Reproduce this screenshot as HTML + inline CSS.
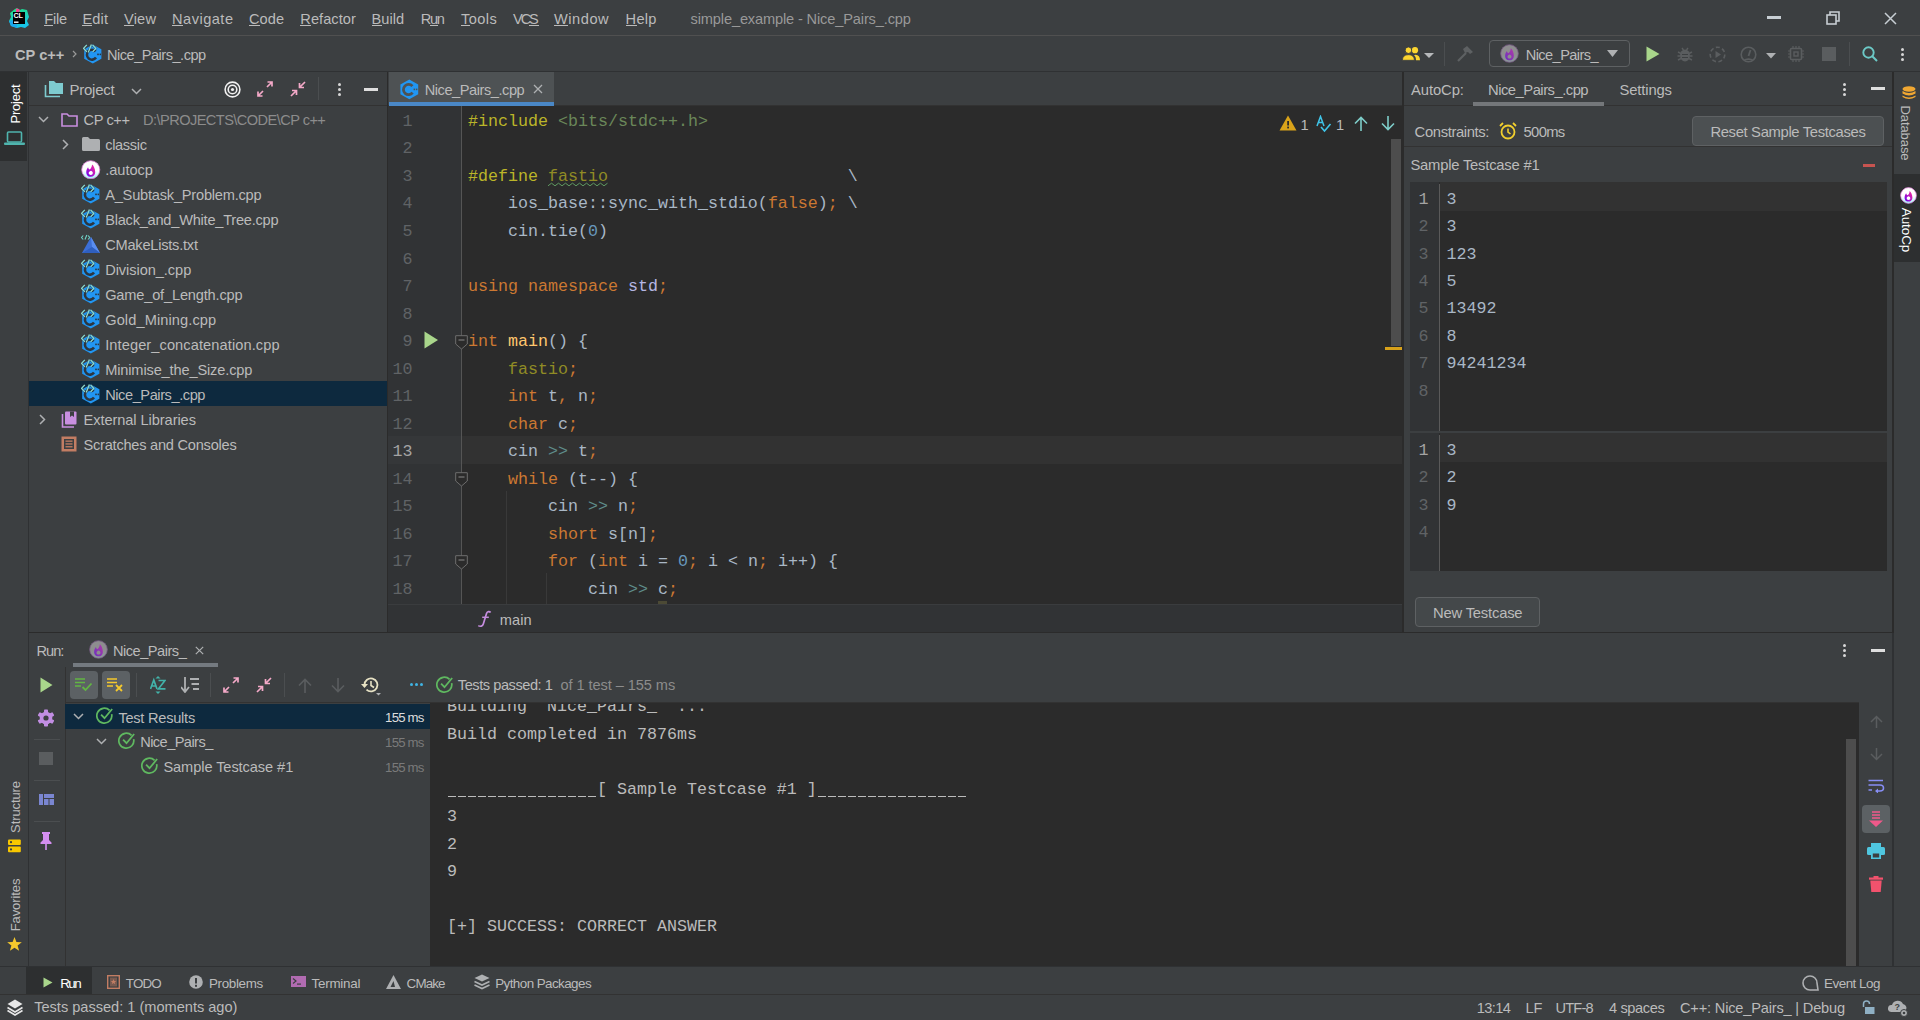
<!DOCTYPE html>
<html><head><meta charset="utf-8"><style>
html,body{margin:0;padding:0;}
body{width:1920px;height:1020px;position:relative;overflow:hidden;background:#3c3f41;font-family:"Liberation Sans",sans-serif;}
body div, body svg{position:absolute;}
body div div{position:absolute;}
</style></head><body>
<div style="left:0px;top:0px;width:1920px;height:35px;background:#3c3f41;"></div>
<div style="left:0px;top:35px;width:1920px;height:1px;background:#505050;"></div>
<svg style="left:9px;top:8px;" width="21" height="21" viewBox="0 0 21 21">
<defs><linearGradient id="lg1" x1="0" y1="0" x2="0.3" y2="1"><stop offset="0" stop-color="#21e37a"/><stop offset="1" stop-color="#18c4e8"/></linearGradient></defs>
<polygon points="1,5 6,1 8,0 11,2 13,1 18,2 20,9 18,13 20,17 16,20 12,19 8,20 2,18 0,13 2,9" fill="url(#lg1)"/>
<polygon points="7,0.5 10,1 11,3 9,4.5 7,4" fill="#f3438f"/>
<polygon points="0,13 4,12 8,17 8,20 2,18" fill="#1ba8ee"/>
<rect x="4" y="4" width="12" height="12" fill="#000"/>
<text x="4.6" y="10.4" font-family="Liberation Sans" font-weight="700" font-size="7.2" fill="#fff" letter-spacing="-0.3">CL</text>
<rect x="5" y="13.5" width="4.5" height="1.4" fill="#fff"/>
</svg>
<div style="left:44.30px;top:8.94px;font-size:14.6px;line-height:20px;color:#bbbbbb;font-family:'Liberation Sans', sans-serif;white-space:pre;letter-spacing:-0.269px;">File</div>
<div style="left:82.50px;top:8.94px;font-size:14.6px;line-height:20px;color:#bbbbbb;font-family:'Liberation Sans', sans-serif;white-space:pre;letter-spacing:0.105px;">Edit</div>
<div style="left:124.00px;top:8.94px;font-size:14.6px;line-height:20px;color:#bbbbbb;font-family:'Liberation Sans', sans-serif;white-space:pre;letter-spacing:0.203px;">View</div>
<div style="left:172.00px;top:8.94px;font-size:14.6px;line-height:20px;color:#bbbbbb;font-family:'Liberation Sans', sans-serif;white-space:pre;letter-spacing:0.486px;">Navigate</div>
<div style="left:249.00px;top:8.94px;font-size:14.6px;line-height:20px;color:#bbbbbb;font-family:'Liberation Sans', sans-serif;white-space:pre;letter-spacing:0.035px;">Code</div>
<div style="left:300.30px;top:8.94px;font-size:14.6px;line-height:20px;color:#bbbbbb;font-family:'Liberation Sans', sans-serif;white-space:pre;letter-spacing:0.059px;">Refactor</div>
<div style="left:371.50px;top:8.94px;font-size:14.6px;line-height:20px;color:#bbbbbb;font-family:'Liberation Sans', sans-serif;white-space:pre;letter-spacing:0.054px;">Build</div>
<div style="left:420.70px;top:8.94px;font-size:14.6px;line-height:20px;color:#bbbbbb;font-family:'Liberation Sans', sans-serif;white-space:pre;letter-spacing:-1.245px;">Run</div>
<div style="left:461.00px;top:8.94px;font-size:14.6px;line-height:20px;color:#bbbbbb;font-family:'Liberation Sans', sans-serif;white-space:pre;letter-spacing:0.427px;">Tools</div>
<div style="left:513.10px;top:8.94px;font-size:14.6px;line-height:20px;color:#bbbbbb;font-family:'Liberation Sans', sans-serif;white-space:pre;letter-spacing:-2.152px;">VCS</div>
<div style="left:554.00px;top:8.94px;font-size:14.6px;line-height:20px;color:#bbbbbb;font-family:'Liberation Sans', sans-serif;white-space:pre;letter-spacing:0.545px;">Window</div>
<div style="left:625.60px;top:8.94px;font-size:14.6px;line-height:20px;color:#bbbbbb;font-family:'Liberation Sans', sans-serif;white-space:pre;letter-spacing:0.266px;">Help</div>
<div style="left:44px;top:25px;width:9px;height:1px;background:#bbbbbb;"></div>
<div style="left:82px;top:25px;width:10px;height:1px;background:#bbbbbb;"></div>
<div style="left:124px;top:25px;width:10px;height:1px;background:#bbbbbb;"></div>
<div style="left:172px;top:25px;width:11px;height:1px;background:#bbbbbb;"></div>
<div style="left:249px;top:25px;width:11px;height:1px;background:#bbbbbb;"></div>
<div style="left:300px;top:25px;width:11px;height:1px;background:#bbbbbb;"></div>
<div style="left:372px;top:25px;width:10px;height:1px;background:#bbbbbb;"></div>
<div style="left:430px;top:25px;width:8px;height:1px;background:#bbbbbb;"></div>
<div style="left:461px;top:25px;width:9px;height:1px;background:#bbbbbb;"></div>
<div style="left:529px;top:25px;width:10px;height:1px;background:#bbbbbb;"></div>
<div style="left:554px;top:25px;width:14px;height:1px;background:#bbbbbb;"></div>
<div style="left:626px;top:25px;width:11px;height:1px;background:#bbbbbb;"></div>
<div style="left:690.60px;top:8.94px;font-size:14.6px;line-height:20px;color:#999999;font-family:'Liberation Sans', sans-serif;white-space:pre;letter-spacing:-0.141px;">simple_example - Nice_Pairs_.cpp</div>
<div style="left:1767px;top:16px;width:14px;height:3px;background:#c7ced3;"></div>
<svg style="left:1826px;top:11px;" width="14" height="14" viewBox="0 0 14 14">
<rect x="1" y="4" width="9" height="9" fill="none" stroke="#c7ced3" stroke-width="1.6"/>
<path d="M4 4 V1 H13 V10 H10" fill="none" stroke="#c7ced3" stroke-width="1.6"/>
</svg>
<svg style="left:1884px;top:12px;" width="13" height="13" viewBox="0 0 13 13"><path d="M1 1 L12 12 M12 1 L1 12" stroke="#c7ced3" stroke-width="1.5"/></svg>
<div style="left:0px;top:36px;width:1920px;height:35px;background:#3c3f41;"></div>
<div style="left:0px;top:71px;width:1920px;height:1px;background:#2f3133;"></div>
<div style="left:15.00px;top:44.54px;font-size:14.6px;line-height:20px;color:#bbbbbb;font-family:'Liberation Sans', sans-serif;white-space:pre;letter-spacing:0.025px;font-weight:700;">CP c++</div>
<svg style="left:72px;top:50px;" width="5" height="8" viewBox="0 0 5 8"><path d="M1 1 L4 4 L1 7" fill="none" stroke="#9a9a9a" stroke-width="1.2"/></svg>
<svg style="left:83px;top:44px;" width="19" height="21" viewBox="0 0 19 21">
<polygon points="9.8,0.6 18.4,5.3 18.4,14.8 9.8,19.6 1.2,14.8 1.2,5.3" fill="#2196f3"/>
<path d="M12.6 7.3 A5 5 0 1 0 13 13.6" fill="none" stroke="#2c3640" stroke-width="2.6"/>
<circle cx="9.4" cy="10.4" r="2.3" fill="#2196f3"/>
<rect x="14.2" y="9.6" width="1.6" height="1.6" fill="#2c3640"/><rect x="16.6" y="9.6" width="1.4" height="1.6" fill="#2c3640"/>
<path d="M3.8 0.9 L0.6 4.4 L3.8 7.9 M5.2 8.4 L8.4 0.6 M9.6 0.9 L12.8 4.4 L9.6 7.9" fill="none" stroke="#2c3640" stroke-width="2.4" opacity="0.5"/>
<path d="M3.8 0.9 L0.6 4.4 L3.8 7.9 M5.2 8.4 L8.4 0.6 M9.6 0.9 L12.8 4.4 L9.6 7.9" fill="none" stroke="#8ddbd0" stroke-width="1.3"/>
</svg>
<div style="left:107.00px;top:44.54px;font-size:14.6px;line-height:20px;color:#bbbbbb;font-family:'Liberation Sans', sans-serif;white-space:pre;letter-spacing:-0.506px;">Nice_Pairs_.cpp</div>
<svg style="left:1402px;top:46px;" width="19" height="15" viewBox="0 0 19 15">
<circle cx="13" cy="4.2" r="3.1" fill="#fcd530"/>
<path d="M13.5 8.8 C16.5 9 18 11 18 14.3 H14 C14 12 13.5 10.2 12 9.2 Z" fill="#fcd530"/>
<circle cx="6.4" cy="4.2" r="3.3" stroke="#3c3f41" stroke-width="1" fill="#fcd530"/>
<path d="M0.4 14.3 C0.4 10.5 2.6 8.7 6.3 8.7 C10 8.7 12.4 10.5 12.4 14.3 Z" fill="#fcd530" stroke="#3c3f41" stroke-width="0.8"/>
</svg>
<svg style="left:1424px;top:53px;" width="10" height="5" viewBox="0 0 10 5"><polygon points="0,0 10,0 5,5" fill="#b7b9bb"/></svg>
<div style="left:1444px;top:42px;width:1px;height:24px;background:#4b4e50;"></div>
<svg style="left:1456px;top:45px;" width="18" height="18" viewBox="0 0 18 18">
<path d="M2 16 L10 8" stroke="#5e6163" stroke-width="2.2"/>
<path d="M7 4 L11 1 L17 7 L14 9 L12 7 L9 8 Z" fill="#5e6163"/>
</svg>
<div style="left:1489px;top:40px;width:141px;height:27px;background:#3c3f41;border:1px solid #5e6163;border-radius:4px;box-sizing:border-box;"></div>
<svg style="left:1500px;top:44px;" width="19" height="19" viewBox="0 0 19 19">
<defs><linearGradient id="fg1" x1="0" y1="1" x2="1" y2="0"><stop offset="0" stop-color="#6b2fc0"/><stop offset="1" stop-color="#b23aa8"/></linearGradient>
<linearGradient id="cg1" x1="0" y1="0" x2="0" y2="1"><stop offset="0.55" stop-color="#8d8d8f"/><stop offset="1" stop-color="#8a9a9c"/></linearGradient></defs>
<g transform="scale(0.95)">
<circle cx="10" cy="10" r="9.3" fill="url(#cg1)" stroke="#7a5a88" stroke-width="0.8"/>
<path d="M10 17.2 C6.6 17.2 5.4 14.5 5.4 12.5 C5.4 10.5 6.1 9 7.2 7.4 C7.5 8.6 8 9.4 8.8 9.8 C10 9.1 11 7.6 11.4 4.6 C13.1 6.1 14.6 9.2 14.6 12.5 C14.6 15.2 12.7 17.2 10 17.2 Z" fill="url(#fg1)"/>
<path d="M10 15.3 C8.6 15.3 7.9 14.3 7.9 13.3 C7.9 12.3 8.7 11.4 10.3 11 C11.5 11.5 12.1 12.4 12.1 13.3 C12.1 14.4 11.3 15.3 10 15.3Z" fill="#8d8d8f"/>
</g>
</svg>
<div style="left:1525.70px;top:44.94px;font-size:14.6px;line-height:20px;color:#bbbbbb;font-family:'Liberation Sans', sans-serif;white-space:pre;letter-spacing:-0.571px;">Nice_Pairs_</div>
<svg style="left:1607px;top:50px;" width="11" height="8" viewBox="0 0 11 8"><polygon points="0,0 11,0 5.5,7" fill="#afb1b3"/></svg>
<svg style="left:1646px;top:46px;" width="14" height="16" viewBox="0 0 14 16"><polygon points="0.5,0.5 13.5,8 0.5,15.5" fill="#a9d68b"/></svg>
<svg style="left:1677px;top:46px;" width="16" height="16" viewBox="0 0 16 16">
<ellipse cx="8" cy="9.5" rx="5" ry="6" fill="#5a5d5f"/>
<path d="M1 6 L4 7.5 M15 6 L12 7.5 M0.5 10 H3 M15.5 10 H13 M1 14 L4 12.5 M15 14 L12 12.5 M5 2 L6.5 4 M11 2 L9.5 4" stroke="#5a5d5f" stroke-width="1.4"/>
<path d="M5 8.5 H11 M5 11.5 H11" stroke="#3c3f41" stroke-width="1.2"/>
</svg>
<svg style="left:1709px;top:46px;" width="17" height="17" viewBox="0 0 17 17">
<circle cx="8.5" cy="8.5" r="7.3" fill="none" stroke="#5a5d5f" stroke-width="1.6" stroke-dasharray="4 2.5"/>
<polygon points="6.5,5 12,8.5 6.5,12" fill="#5a5d5f"/>
</svg>
<svg style="left:1740px;top:46px;" width="17" height="17" viewBox="0 0 17 17">
<circle cx="8.5" cy="8.5" r="7.3" fill="none" stroke="#5a5d5f" stroke-width="1.6"/>
<path d="M3.5 14 A6 4 0 0 1 13.5 14 Z" fill="#5a5d5f"/>
<path d="M8.5 10 L10.5 4" stroke="#5a5d5f" stroke-width="1.8"/>
</svg>
<svg style="left:1766px;top:53px;" width="10" height="6" viewBox="0 0 10 6"><polygon points="0,0 10,0 5,5.5" fill="#afb1b3"/></svg>
<svg style="left:1788px;top:46px;" width="16" height="16" viewBox="0 0 16 16">
<rect x="2.5" y="2.5" width="11" height="11" rx="1" fill="none" stroke="#5a5d5f" stroke-width="1.6"/>
<rect x="6" y="6" width="4" height="4" fill="none" stroke="#5a5d5f" stroke-width="1.4"/>
<path d="M5 0 V2 M8 0 V2 M11 0 V2 M5 14 V16 M8 14 V16 M11 14 V16 M0 5 H2 M0 8 H2 M0 11 H2 M14 5 H16 M14 8 H16 M14 11 H16" stroke="#5a5d5f" stroke-width="1.2"/>
</svg>
<div style="left:1822px;top:47px;width:14px;height:14px;background:#5a5d5f;"></div>
<div style="left:1849px;top:42px;width:1px;height:24px;background:#4b4e50;"></div>
<svg style="left:1862px;top:46px;" width="16" height="16" viewBox="0 0 16 16">
<circle cx="6.5" cy="6.5" r="5.2" fill="none" stroke="#6cc9c6" stroke-width="1.9"/>
<path d="M10.3 10.3 L15 15" stroke="#6cc9c6" stroke-width="2"/>
</svg>
<div style="left:1900.9px;top:47.5px;width:3.2px;height:3.2px;border-radius:50%;background:#d7d7d7"></div>
<div style="left:1900.9px;top:52.5px;width:3.2px;height:3.2px;border-radius:50%;background:#d7d7d7"></div>
<div style="left:1900.9px;top:57.5px;width:3.2px;height:3.2px;border-radius:50%;background:#d7d7d7"></div>
<div style="left:0px;top:72px;width:28px;height:894px;background:#3c3f41;"></div>
<div style="left:28px;top:72px;width:1px;height:894px;background:#2f3133;"></div>
<div style="left:0px;top:72px;width:27px;height:89px;background:#2d2f30;"></div>
<div style="left:0.00px;top:-0.85px;font-size:1px;line-height:1px;color:#bbbbbb;font-family:'Liberation Sans', sans-serif;white-space:pre;"></div>
<div style="left:-4px;top:94.5px;width:40px;height:18px;transform:rotate(-90deg);font-family:'Liberation Sans';font-size:13px;line-height:18px;color:#ffffff;text-align:center;white-space:pre;letter-spacing:-0.2px">Project</div>
<svg style="left:4px;top:131px;" width="21" height="15" viewBox="0 0 21 15">
<rect x="3.5" y="1" width="14" height="10" rx="1" fill="none" stroke="#4fb4ad" stroke-width="1.6"/>
<rect x="0" y="11.5" width="21" height="2.5" rx="1" fill="#4fb4ad"/>
</svg>
<div style="left:-18px;top:798px;width:68px;height:18px;transform:rotate(-90deg);font-family:'Liberation Sans';font-size:13px;line-height:18px;color:#bbbbbb;text-align:center;white-space:pre;letter-spacing:-0.1px">Structure</div>
<svg style="left:8px;top:839px;" width="13" height="14" viewBox="0 0 13 14">
<rect x="0" y="0.4" width="12.8" height="5.6" rx="1" fill="#f9c800"/><rect x="0" y="7.6" width="12.8" height="5.6" rx="1" fill="#f9c800"/>
<circle cx="3" cy="3.2" r="1.1" fill="#3c3f41"/><circle cx="3" cy="10.4" r="1.1" fill="#3c3f41"/>
</svg>
<div style="left:-18px;top:896px;width:68px;height:18px;transform:rotate(-90deg);font-family:'Liberation Sans';font-size:13px;line-height:18px;color:#bbbbbb;text-align:center;white-space:pre;letter-spacing:-0.1px">Favorites</div>
<svg style="left:7px;top:937px;" width="15" height="14" viewBox="0 0 15 14"><polygon points="7.5,0 9.4,5 14.8,5.2 10.6,8.6 12.1,13.8 7.5,10.8 2.9,13.8 4.4,8.6 0.2,5.2 5.6,5" fill="#f4c82d"/></svg>
<div style="left:29px;top:72px;width:358px;height:561px;background:#3c3f41;"></div>
<div style="left:29px;top:105px;width:358px;height:1px;background:#323232;"></div>
<div style="left:387px;top:72px;width:1px;height:561px;background:#2b2b2b;"></div>
<svg style="left:44px;top:80px;" width="20" height="18" viewBox="0 0 20 18">
<path d="M5 1 H10 L12 3 H19 V14 H5 Z" fill="#7ecbcf"/>
<path d="M1.5 5 V16.5 H16" fill="none" stroke="#7ecbcf" stroke-width="1.6"/>
</svg>
<div style="left:69.50px;top:79.30px;font-size:15px;line-height:21px;color:#bbbbbb;font-family:'Liberation Sans', sans-serif;white-space:pre;letter-spacing:-0.242px;">Project</div>
<svg style="left:131px;top:88px;" width="11" height="7" viewBox="0 0 11 7"><path d="M1 1 L5.5 5.5 L10 1" fill="none" stroke="#aeb0b2" stroke-width="1.5"/></svg>
<svg style="left:224px;top:81px;" width="17" height="17" viewBox="0 0 17 17">
<circle cx="8.5" cy="8.5" r="7.4" fill="none" stroke="#f0f0f0" stroke-width="1.6"/>
<circle cx="8.5" cy="8.5" r="4.3" fill="none" stroke="#f0f0f0" stroke-width="1.6"/>
<circle cx="8.5" cy="8.5" r="1.6" fill="#f0f0f0"/>
</svg>
<svg style="left:257px;top:81px;" width="16" height="16" viewBox="0 0 16 16">
<path d="M10 6 L15 1 M10.5 1 H15 V5.5 M6 10 L1 15 M1 10.5 V15 H5.5" fill="none" stroke="#f4a9c8" stroke-width="1.7"/>
</svg>
<svg style="left:290px;top:81px;" width="16" height="16" viewBox="0 0 16 16">
<path d="M9.5 6.5 L15 1 M9.5 2 V6.5 H14 M6.5 9.5 L1 15 M2 9.5 H6.5 V14" fill="none" stroke="#f4a9c8" stroke-width="1.7"/>
</svg>
<div style="left:318px;top:77px;width:1px;height:23px;background:#4b4e50;"></div>
<div style="left:337.9px;top:82.5px;width:3.2px;height:3.2px;border-radius:50%;background:#d7d7d7"></div>
<div style="left:337.9px;top:87.5px;width:3.2px;height:3.2px;border-radius:50%;background:#d7d7d7"></div>
<div style="left:337.9px;top:92.5px;width:3.2px;height:3.2px;border-radius:50%;background:#d7d7d7"></div>
<div style="left:364px;top:88px;width:14px;height:3px;background:#dedede;"></div>
<div style="left:29px;top:381px;width:358px;height:25px;background:#0d293e;"></div>
<svg style="left:37.5px;top:115.5px;" width="11" height="7" viewBox="0 0 11 7"><path d="M1 1 L5.5 5.5 L10 1" fill="none" stroke="#aeb0b2" stroke-width="1.5"/></svg>
<svg style="left:61px;top:112px;" width="17" height="15" viewBox="0 0 17 15"><path d="M1 2 H6 L8 4 H16 V14 H1 Z" fill="none" stroke="#c98fe0" stroke-width="1.6"/></svg>
<div style="left:83.60px;top:109.94px;font-size:14.6px;line-height:20px;color:#bbbbbb;font-family:'Liberation Sans', sans-serif;white-space:pre;letter-spacing:-0.420px;">CP c++</div>
<div style="left:143.00px;top:109.94px;font-size:14.6px;line-height:20px;color:#8c8c8c;font-family:'Liberation Sans', sans-serif;white-space:pre;letter-spacing:-0.558px;">D:\PROJECTS\CODE\CP c++</div>
<svg style="left:62px;top:138.5px;" width="7" height="11" viewBox="0 0 7 11"><path d="M1 1 L5.5 5.5 L1 10" fill="none" stroke="#aeb0b2" stroke-width="1.5"/></svg>
<svg style="left:82px;top:137px;" width="18" height="14" viewBox="0 0 18 14"><path d="M0 1.5 Q0 0 1.5 0 H6 L8 2 H16.5 Q18 2 18 3.5 V12.5 Q18 14 16.5 14 H1.5 Q0 14 0 12.5 Z" fill="#aeb0b2"/></svg>
<div style="left:105.20px;top:134.74px;font-size:14.6px;line-height:20px;color:#bbbbbb;font-family:'Liberation Sans', sans-serif;white-space:pre;letter-spacing:-0.333px;">classic</div>
<svg style="left:81px;top:159.5px;" width="19.5" height="19.5" viewBox="0 0 19.5 19.5">
<defs><linearGradient id="fg2" x1="0" y1="1" x2="1" y2="0"><stop offset="0" stop-color="#6a00f4"/><stop offset="1" stop-color="#ff2d95"/></linearGradient>
<linearGradient id="cg2" x1="0" y1="0" x2="0" y2="1"><stop offset="0.55" stop-color="#ffffff"/><stop offset="1" stop-color="#9ff5f5"/></linearGradient></defs>
<g transform="scale(0.975)">
<circle cx="10" cy="10" r="9.3" fill="url(#cg2)" stroke="#e07ad8" stroke-width="0.8"/>
<path d="M10 17.2 C6.6 17.2 5.4 14.5 5.4 12.5 C5.4 10.5 6.1 9 7.2 7.4 C7.5 8.6 8 9.4 8.8 9.8 C10 9.1 11 7.6 11.4 4.6 C13.1 6.1 14.6 9.2 14.6 12.5 C14.6 15.2 12.7 17.2 10 17.2 Z" fill="url(#fg2)"/>
<path d="M10 15.3 C8.6 15.3 7.9 14.3 7.9 13.3 C7.9 12.3 8.7 11.4 10.3 11 C11.5 11.5 12.1 12.4 12.1 13.3 C12.1 14.4 11.3 15.3 10 15.3Z" fill="#ffffff"/>
</g>
</svg>
<div style="left:105.20px;top:159.74px;font-size:14.6px;line-height:20px;color:#bbbbbb;font-family:'Liberation Sans', sans-serif;white-space:pre;letter-spacing:-0.015px;">.autocp</div>
<svg style="left:81px;top:184px;" width="19" height="21" viewBox="0 0 19 21">
<polygon points="9.8,0.6 18.4,5.3 18.4,14.8 9.8,19.6 1.2,14.8 1.2,5.3" fill="#2196f3"/>
<path d="M12.6 7.3 A5 5 0 1 0 13 13.6" fill="none" stroke="#2c3640" stroke-width="2.6"/>
<circle cx="9.4" cy="10.4" r="2.3" fill="#2196f3"/>
<rect x="14.2" y="9.6" width="1.6" height="1.6" fill="#2c3640"/><rect x="16.6" y="9.6" width="1.4" height="1.6" fill="#2c3640"/>
<path d="M3.8 0.9 L0.6 4.4 L3.8 7.9 M5.2 8.4 L8.4 0.6 M9.6 0.9 L12.8 4.4 L9.6 7.9" fill="none" stroke="#2c3640" stroke-width="2.4" opacity="0.5"/>
<path d="M3.8 0.9 L0.6 4.4 L3.8 7.9 M5.2 8.4 L8.4 0.6 M9.6 0.9 L12.8 4.4 L9.6 7.9" fill="none" stroke="#8ddbd0" stroke-width="1.3"/>
</svg>
<div style="left:105.20px;top:184.74px;font-size:14.6px;line-height:20px;color:#bbbbbb;font-family:'Liberation Sans', sans-serif;white-space:pre;letter-spacing:-0.209px;">A_Subtask_Problem.cpp</div>
<svg style="left:81px;top:209px;" width="19" height="21" viewBox="0 0 19 21">
<polygon points="9.8,0.6 18.4,5.3 18.4,14.8 9.8,19.6 1.2,14.8 1.2,5.3" fill="#2196f3"/>
<path d="M12.6 7.3 A5 5 0 1 0 13 13.6" fill="none" stroke="#2c3640" stroke-width="2.6"/>
<circle cx="9.4" cy="10.4" r="2.3" fill="#2196f3"/>
<rect x="14.2" y="9.6" width="1.6" height="1.6" fill="#2c3640"/><rect x="16.6" y="9.6" width="1.4" height="1.6" fill="#2c3640"/>
<path d="M3.8 0.9 L0.6 4.4 L3.8 7.9 M5.2 8.4 L8.4 0.6 M9.6 0.9 L12.8 4.4 L9.6 7.9" fill="none" stroke="#2c3640" stroke-width="2.4" opacity="0.5"/>
<path d="M3.8 0.9 L0.6 4.4 L3.8 7.9 M5.2 8.4 L8.4 0.6 M9.6 0.9 L12.8 4.4 L9.6 7.9" fill="none" stroke="#8ddbd0" stroke-width="1.3"/>
</svg>
<div style="left:105.20px;top:209.74px;font-size:14.6px;line-height:20px;color:#bbbbbb;font-family:'Liberation Sans', sans-serif;white-space:pre;letter-spacing:-0.233px;">Black_and_White_Tree.cpp</div>
<svg style="left:81px;top:234px;" width="19" height="20" viewBox="0 0 19 20">
<path d="M2.2 1.5 L0.5 3.5 L2.2 5.5 M4 5.5 L5.8 1 M7 1.5 L8.8 3.5 L7 5.5" fill="none" stroke="#6fd4c9" stroke-width="1.1"/>
<polygon points="10,3 19,19 1,19" fill="#3c6fd6"/>
<polygon points="10,3 11,13 19,19" fill="#5a8df0"/>
<polygon points="1,19 11,13 19,19" fill="#2f5fbf"/>
</svg>
<div style="left:105.20px;top:234.74px;font-size:14.6px;line-height:20px;color:#bbbbbb;font-family:'Liberation Sans', sans-serif;white-space:pre;letter-spacing:-0.223px;">CMakeLists.txt</div>
<svg style="left:81px;top:259px;" width="19" height="21" viewBox="0 0 19 21">
<polygon points="9.8,0.6 18.4,5.3 18.4,14.8 9.8,19.6 1.2,14.8 1.2,5.3" fill="#2196f3"/>
<path d="M12.6 7.3 A5 5 0 1 0 13 13.6" fill="none" stroke="#2c3640" stroke-width="2.6"/>
<circle cx="9.4" cy="10.4" r="2.3" fill="#2196f3"/>
<rect x="14.2" y="9.6" width="1.6" height="1.6" fill="#2c3640"/><rect x="16.6" y="9.6" width="1.4" height="1.6" fill="#2c3640"/>
<path d="M3.8 0.9 L0.6 4.4 L3.8 7.9 M5.2 8.4 L8.4 0.6 M9.6 0.9 L12.8 4.4 L9.6 7.9" fill="none" stroke="#2c3640" stroke-width="2.4" opacity="0.5"/>
<path d="M3.8 0.9 L0.6 4.4 L3.8 7.9 M5.2 8.4 L8.4 0.6 M9.6 0.9 L12.8 4.4 L9.6 7.9" fill="none" stroke="#8ddbd0" stroke-width="1.3"/>
</svg>
<div style="left:105.20px;top:259.74px;font-size:14.6px;line-height:20px;color:#bbbbbb;font-family:'Liberation Sans', sans-serif;white-space:pre;letter-spacing:-0.058px;">Division_.cpp</div>
<svg style="left:81px;top:284px;" width="19" height="21" viewBox="0 0 19 21">
<polygon points="9.8,0.6 18.4,5.3 18.4,14.8 9.8,19.6 1.2,14.8 1.2,5.3" fill="#2196f3"/>
<path d="M12.6 7.3 A5 5 0 1 0 13 13.6" fill="none" stroke="#2c3640" stroke-width="2.6"/>
<circle cx="9.4" cy="10.4" r="2.3" fill="#2196f3"/>
<rect x="14.2" y="9.6" width="1.6" height="1.6" fill="#2c3640"/><rect x="16.6" y="9.6" width="1.4" height="1.6" fill="#2c3640"/>
<path d="M3.8 0.9 L0.6 4.4 L3.8 7.9 M5.2 8.4 L8.4 0.6 M9.6 0.9 L12.8 4.4 L9.6 7.9" fill="none" stroke="#2c3640" stroke-width="2.4" opacity="0.5"/>
<path d="M3.8 0.9 L0.6 4.4 L3.8 7.9 M5.2 8.4 L8.4 0.6 M9.6 0.9 L12.8 4.4 L9.6 7.9" fill="none" stroke="#8ddbd0" stroke-width="1.3"/>
</svg>
<div style="left:105.20px;top:284.74px;font-size:14.6px;line-height:20px;color:#bbbbbb;font-family:'Liberation Sans', sans-serif;white-space:pre;letter-spacing:-0.174px;">Game_of_Length.cpp</div>
<svg style="left:81px;top:309px;" width="19" height="21" viewBox="0 0 19 21">
<polygon points="9.8,0.6 18.4,5.3 18.4,14.8 9.8,19.6 1.2,14.8 1.2,5.3" fill="#2196f3"/>
<path d="M12.6 7.3 A5 5 0 1 0 13 13.6" fill="none" stroke="#2c3640" stroke-width="2.6"/>
<circle cx="9.4" cy="10.4" r="2.3" fill="#2196f3"/>
<rect x="14.2" y="9.6" width="1.6" height="1.6" fill="#2c3640"/><rect x="16.6" y="9.6" width="1.4" height="1.6" fill="#2c3640"/>
<path d="M3.8 0.9 L0.6 4.4 L3.8 7.9 M5.2 8.4 L8.4 0.6 M9.6 0.9 L12.8 4.4 L9.6 7.9" fill="none" stroke="#2c3640" stroke-width="2.4" opacity="0.5"/>
<path d="M3.8 0.9 L0.6 4.4 L3.8 7.9 M5.2 8.4 L8.4 0.6 M9.6 0.9 L12.8 4.4 L9.6 7.9" fill="none" stroke="#8ddbd0" stroke-width="1.3"/>
</svg>
<div style="left:105.20px;top:309.74px;font-size:14.6px;line-height:20px;color:#bbbbbb;font-family:'Liberation Sans', sans-serif;white-space:pre;letter-spacing:0.102px;">Gold_Mining.cpp</div>
<svg style="left:81px;top:334px;" width="19" height="21" viewBox="0 0 19 21">
<polygon points="9.8,0.6 18.4,5.3 18.4,14.8 9.8,19.6 1.2,14.8 1.2,5.3" fill="#2196f3"/>
<path d="M12.6 7.3 A5 5 0 1 0 13 13.6" fill="none" stroke="#2c3640" stroke-width="2.6"/>
<circle cx="9.4" cy="10.4" r="2.3" fill="#2196f3"/>
<rect x="14.2" y="9.6" width="1.6" height="1.6" fill="#2c3640"/><rect x="16.6" y="9.6" width="1.4" height="1.6" fill="#2c3640"/>
<path d="M3.8 0.9 L0.6 4.4 L3.8 7.9 M5.2 8.4 L8.4 0.6 M9.6 0.9 L12.8 4.4 L9.6 7.9" fill="none" stroke="#2c3640" stroke-width="2.4" opacity="0.5"/>
<path d="M3.8 0.9 L0.6 4.4 L3.8 7.9 M5.2 8.4 L8.4 0.6 M9.6 0.9 L12.8 4.4 L9.6 7.9" fill="none" stroke="#8ddbd0" stroke-width="1.3"/>
</svg>
<div style="left:105.20px;top:334.74px;font-size:14.6px;line-height:20px;color:#bbbbbb;font-family:'Liberation Sans', sans-serif;white-space:pre;letter-spacing:0.097px;">Integer_concatenation.cpp</div>
<svg style="left:81px;top:359px;" width="19" height="21" viewBox="0 0 19 21">
<polygon points="9.8,0.6 18.4,5.3 18.4,14.8 9.8,19.6 1.2,14.8 1.2,5.3" fill="#2196f3"/>
<path d="M12.6 7.3 A5 5 0 1 0 13 13.6" fill="none" stroke="#2c3640" stroke-width="2.6"/>
<circle cx="9.4" cy="10.4" r="2.3" fill="#2196f3"/>
<rect x="14.2" y="9.6" width="1.6" height="1.6" fill="#2c3640"/><rect x="16.6" y="9.6" width="1.4" height="1.6" fill="#2c3640"/>
<path d="M3.8 0.9 L0.6 4.4 L3.8 7.9 M5.2 8.4 L8.4 0.6 M9.6 0.9 L12.8 4.4 L9.6 7.9" fill="none" stroke="#2c3640" stroke-width="2.4" opacity="0.5"/>
<path d="M3.8 0.9 L0.6 4.4 L3.8 7.9 M5.2 8.4 L8.4 0.6 M9.6 0.9 L12.8 4.4 L9.6 7.9" fill="none" stroke="#8ddbd0" stroke-width="1.3"/>
</svg>
<div style="left:105.20px;top:359.74px;font-size:14.6px;line-height:20px;color:#bbbbbb;font-family:'Liberation Sans', sans-serif;white-space:pre;letter-spacing:-0.143px;">Minimise_the_Size.cpp</div>
<svg style="left:81px;top:384px;" width="19" height="21" viewBox="0 0 19 21">
<polygon points="9.8,0.6 18.4,5.3 18.4,14.8 9.8,19.6 1.2,14.8 1.2,5.3" fill="#2196f3"/>
<path d="M12.6 7.3 A5 5 0 1 0 13 13.6" fill="none" stroke="#2c3640" stroke-width="2.6"/>
<circle cx="9.4" cy="10.4" r="2.3" fill="#2196f3"/>
<rect x="14.2" y="9.6" width="1.6" height="1.6" fill="#2c3640"/><rect x="16.6" y="9.6" width="1.4" height="1.6" fill="#2c3640"/>
<path d="M3.8 0.9 L0.6 4.4 L3.8 7.9 M5.2 8.4 L8.4 0.6 M9.6 0.9 L12.8 4.4 L9.6 7.9" fill="none" stroke="#2c3640" stroke-width="2.4" opacity="0.5"/>
<path d="M3.8 0.9 L0.6 4.4 L3.8 7.9 M5.2 8.4 L8.4 0.6 M9.6 0.9 L12.8 4.4 L9.6 7.9" fill="none" stroke="#8ddbd0" stroke-width="1.3"/>
</svg>
<div style="left:105.20px;top:384.74px;font-size:14.6px;line-height:20px;color:#bbbbbb;font-family:'Liberation Sans', sans-serif;white-space:pre;letter-spacing:-0.428px;">Nice_Pairs_.cpp</div>
<svg style="left:39px;top:414px;" width="7" height="11" viewBox="0 0 7 11"><path d="M1 1 L5.5 5.5 L1 10" fill="none" stroke="#aeb0b2" stroke-width="1.5"/></svg>
<svg style="left:61px;top:411px;" width="16" height="17" viewBox="0 0 16 17">
<rect x="4" y="0.5" width="11.5" height="13" rx="1" fill="#c98fe0"/>
<path d="M1.5 3 V16 H13" fill="none" stroke="#c98fe0" stroke-width="1.6"/>
<path d="M9 0.5 V6 L11 4.5 L13 6 V0.5" fill="#3c3f41"/>
</svg>
<div style="left:83.50px;top:409.74px;font-size:14.6px;line-height:20px;color:#bbbbbb;font-family:'Liberation Sans', sans-serif;white-space:pre;letter-spacing:-0.064px;">External Libraries</div>
<svg style="left:61px;top:436px;" width="16" height="16" viewBox="0 0 16 16">
<rect x="0.5" y="0.5" width="15" height="15" fill="#c27d63"/>
<rect x="3" y="3" width="10" height="10" fill="#3c3f41"/>
<rect x="4.5" y="4.5" width="7" height="1.3" fill="#c27d63"/><rect x="4.5" y="7.3" width="7" height="1.3" fill="#c27d63"/><rect x="4.5" y="10.1" width="7" height="1.3" fill="#c27d63"/>
</svg>
<div style="left:83.50px;top:434.74px;font-size:14.6px;line-height:20px;color:#bbbbbb;font-family:'Liberation Sans', sans-serif;white-space:pre;letter-spacing:-0.236px;">Scratches and Consoles</div>
<div style="left:388px;top:72px;width:1014px;height:33px;background:#3c3f41;"></div>
<div style="left:388px;top:105px;width:1014px;height:1px;background:#323232;"></div>
<div style="left:389px;top:72px;width:165px;height:30px;background:#4e5254;"></div>
<div style="left:389px;top:102px;width:165px;height:4px;background:#4a88c7;"></div>
<svg style="left:399.5px;top:79px;" width="19" height="21" viewBox="0 0 19 21">
<polygon points="9.3,0.4 18.2,5.4 18.2,15.2 9.3,20.2 0.4,15.2 0.4,5.4" fill="#2196f3"/>
<path d="M12.4 7.2 A5.1 5.1 0 1 0 12.6 13.6" fill="none" stroke="#4e5254" stroke-width="2.8"/>
<circle cx="9.1" cy="10.4" r="2.3" fill="#2196f3"/>
<rect x="13.6" y="9.6" width="1.6" height="1.6" fill="#4e5254"/><rect x="16" y="9.6" width="1.4" height="1.6" fill="#4e5254"/>
</svg>
<div style="left:424.70px;top:79.64px;font-size:14.6px;line-height:20px;color:#bbbbbb;font-family:'Liberation Sans', sans-serif;white-space:pre;letter-spacing:-0.449px;">Nice_Pairs_.cpp</div>
<svg style="left:533px;top:84px;" width="10" height="10" viewBox="0 0 10 10"><path d="M1 1 L9 9 M9 1 L1 9" stroke="#aeb0b2" stroke-width="1.3"/></svg>
<div style="left:388px;top:106px;width:1014px;height:498px;background:#2b2b2b;"></div>
<div style="left:388px;top:106px;width:73px;height:498px;background:#313335;"></div>
<div style="left:461px;top:106px;width:1px;height:498px;background:#555555;"></div>
<div style="left:388px;top:436px;width:73px;height:27.5px;background:#353739;"></div>
<div style="left:462px;top:436px;width:940px;height:27.5px;background:#323232;"></div>
<div style="left:402.50px;top:109.86px;font-size:16.67px;line-height:23px;color:#606366;font-family:'Liberation Mono', monospace;white-space:pre;">1</div>
<div style="left:402.50px;top:137.39px;font-size:16.67px;line-height:23px;color:#606366;font-family:'Liberation Mono', monospace;white-space:pre;">2</div>
<div style="left:402.50px;top:164.92px;font-size:16.67px;line-height:23px;color:#606366;font-family:'Liberation Mono', monospace;white-space:pre;">3</div>
<div style="left:402.50px;top:192.45px;font-size:16.67px;line-height:23px;color:#606366;font-family:'Liberation Mono', monospace;white-space:pre;">4</div>
<div style="left:402.50px;top:219.98px;font-size:16.67px;line-height:23px;color:#606366;font-family:'Liberation Mono', monospace;white-space:pre;">5</div>
<div style="left:402.50px;top:247.51px;font-size:16.67px;line-height:23px;color:#606366;font-family:'Liberation Mono', monospace;white-space:pre;">6</div>
<div style="left:402.50px;top:275.04px;font-size:16.67px;line-height:23px;color:#606366;font-family:'Liberation Mono', monospace;white-space:pre;">7</div>
<div style="left:402.50px;top:302.57px;font-size:16.67px;line-height:23px;color:#606366;font-family:'Liberation Mono', monospace;white-space:pre;">8</div>
<div style="left:402.50px;top:330.10px;font-size:16.67px;line-height:23px;color:#606366;font-family:'Liberation Mono', monospace;white-space:pre;">9</div>
<div style="left:392.50px;top:357.63px;font-size:16.67px;line-height:23px;color:#606366;font-family:'Liberation Mono', monospace;white-space:pre;">10</div>
<div style="left:392.50px;top:385.16px;font-size:16.67px;line-height:23px;color:#606366;font-family:'Liberation Mono', monospace;white-space:pre;">11</div>
<div style="left:392.50px;top:412.69px;font-size:16.67px;line-height:23px;color:#606366;font-family:'Liberation Mono', monospace;white-space:pre;">12</div>
<div style="left:392.50px;top:440.22px;font-size:16.67px;line-height:23px;color:#a4a3a3;font-family:'Liberation Mono', monospace;white-space:pre;">13</div>
<div style="left:392.50px;top:467.75px;font-size:16.67px;line-height:23px;color:#606366;font-family:'Liberation Mono', monospace;white-space:pre;">14</div>
<div style="left:392.50px;top:495.28px;font-size:16.67px;line-height:23px;color:#606366;font-family:'Liberation Mono', monospace;white-space:pre;">15</div>
<div style="left:392.50px;top:522.81px;font-size:16.67px;line-height:23px;color:#606366;font-family:'Liberation Mono', monospace;white-space:pre;">16</div>
<div style="left:392.50px;top:550.34px;font-size:16.67px;line-height:23px;color:#606366;font-family:'Liberation Mono', monospace;white-space:pre;">17</div>
<div style="left:392.50px;top:577.87px;font-size:16.67px;line-height:23px;color:#606366;font-family:'Liberation Mono', monospace;white-space:pre;">18</div>
<div style="left:506px;top:491px;width:1px;height:113px;background:#393939;"></div>
<div style="left:546px;top:573px;width:1px;height:31px;background:#393939;"></div>
<div style="left:468px;top:107.86px;font-family:'Liberation Mono',monospace;font-size:16.67px;line-height:27px;white-space:pre;color:#a9b7c6"><span style="color:#bbb529">#include</span><span style="color:#a9b7c6"> </span><span style="color:#6a8759">&lt;bits/stdc++.h&gt;</span></div>
<div style="left:468px;top:162.92px;font-family:'Liberation Mono',monospace;font-size:16.67px;line-height:27px;white-space:pre;color:#a9b7c6"><span style="color:#bbb529">#define</span><span style="color:#a9b7c6"> </span><span style="color:#908b25">fastio</span><span style="color:#a9b7c6">                        </span><span style="color:#a9b7c6">\</span></div>
<div style="left:468px;top:190.45px;font-family:'Liberation Mono',monospace;font-size:16.67px;line-height:27px;white-space:pre;color:#a9b7c6"><span style="color:#a9b7c6">    ios_base::sync_with_stdio(</span><span style="color:#cc7832">false</span><span style="color:#a9b7c6">)</span><span style="color:#cc7832">;</span><span style="color:#a9b7c6"> \</span></div>
<div style="left:468px;top:217.98px;font-family:'Liberation Mono',monospace;font-size:16.67px;line-height:27px;white-space:pre;color:#a9b7c6"><span style="color:#a9b7c6">    cin.tie(</span><span style="color:#6897bb">0</span><span style="color:#a9b7c6">)</span></div>
<div style="left:468px;top:273.04px;font-family:'Liberation Mono',monospace;font-size:16.67px;line-height:27px;white-space:pre;color:#a9b7c6"><span style="color:#cc7832">using namespace</span><span style="color:#a9b7c6"> </span><span style="color:#b5b6e3">std</span><span style="color:#cc7832">;</span></div>
<div style="left:468px;top:328.10px;font-family:'Liberation Mono',monospace;font-size:16.67px;line-height:27px;white-space:pre;color:#a9b7c6"><span style="color:#cc7832">int</span><span style="color:#a9b7c6"> </span><span style="color:#ffc66d">main</span><span style="color:#a9b7c6">() {</span></div>
<div style="left:468px;top:355.63px;font-family:'Liberation Mono',monospace;font-size:16.67px;line-height:27px;white-space:pre;color:#a9b7c6"><span style="color:#a9b7c6">    </span><span style="color:#908b25">fastio</span><span style="color:#cc7832">;</span></div>
<div style="left:468px;top:383.16px;font-family:'Liberation Mono',monospace;font-size:16.67px;line-height:27px;white-space:pre;color:#a9b7c6"><span style="color:#a9b7c6">    </span><span style="color:#cc7832">int</span><span style="color:#a9b7c6"> t</span><span style="color:#cc7832">,</span><span style="color:#a9b7c6"> n</span><span style="color:#cc7832">;</span></div>
<div style="left:468px;top:410.69px;font-family:'Liberation Mono',monospace;font-size:16.67px;line-height:27px;white-space:pre;color:#a9b7c6"><span style="color:#a9b7c6">    </span><span style="color:#cc7832">char</span><span style="color:#a9b7c6"> c</span><span style="color:#cc7832">;</span></div>
<div style="left:468px;top:438.22px;font-family:'Liberation Mono',monospace;font-size:16.67px;line-height:27px;white-space:pre;color:#a9b7c6"><span style="color:#a9b7c6">    cin </span><span style="color:#5f8c8a">&gt;&gt;</span><span style="color:#a9b7c6"> t</span><span style="color:#cc7832">;</span></div>
<div style="left:468px;top:465.75px;font-family:'Liberation Mono',monospace;font-size:16.67px;line-height:27px;white-space:pre;color:#a9b7c6"><span style="color:#a9b7c6">    </span><span style="color:#cc7832">while</span><span style="color:#a9b7c6"> (t--) {</span></div>
<div style="left:468px;top:493.28px;font-family:'Liberation Mono',monospace;font-size:16.67px;line-height:27px;white-space:pre;color:#a9b7c6"><span style="color:#a9b7c6">        cin </span><span style="color:#5f8c8a">&gt;&gt;</span><span style="color:#a9b7c6"> n</span><span style="color:#cc7832">;</span></div>
<div style="left:468px;top:520.81px;font-family:'Liberation Mono',monospace;font-size:16.67px;line-height:27px;white-space:pre;color:#a9b7c6"><span style="color:#a9b7c6">        </span><span style="color:#cc7832">short</span><span style="color:#a9b7c6"> s[n]</span><span style="color:#cc7832">;</span></div>
<div style="left:468px;top:548.34px;font-family:'Liberation Mono',monospace;font-size:16.67px;line-height:27px;white-space:pre;color:#a9b7c6"><span style="color:#a9b7c6">        </span><span style="color:#cc7832">for</span><span style="color:#a9b7c6"> (</span><span style="color:#cc7832">int</span><span style="color:#a9b7c6"> i = </span><span style="color:#6897bb">0</span><span style="color:#cc7832">;</span><span style="color:#a9b7c6"> i &lt; n</span><span style="color:#cc7832">;</span><span style="color:#a9b7c6"> i++) {</span></div>
<div style="left:468px;top:575.87px;font-family:'Liberation Mono',monospace;font-size:16.67px;line-height:27px;white-space:pre;color:#a9b7c6"><span style="color:#a9b7c6">            cin </span><span style="color:#5f8c8a">&gt;&gt;</span><span style="color:#a9b7c6"> c</span><span style="color:#cc7832">;</span></div>
<svg style="left:547px;top:182px;" width="62" height="5" viewBox="0 0 62 5"><path d="M1 3.8 L4.5 1.2 L8.0 3.8 L11.5 1.2 L15.0 3.8 L18.5 1.2 L22.0 3.8 L25.5 1.2 L29.0 3.8 L32.5 1.2 L36.0 3.8 L39.5 1.2 L43.0 3.8 L46.5 1.2 L50.0 3.8 L53.5 1.2 L57.0 3.8 L60.5 1.2" fill="none" stroke="#5f9a62" stroke-width="1"/></svg>
<div style="left:658px;top:601px;width:9px;height:3px;background:#4c4a35;"></div>
<svg style="left:424px;top:331px;" width="15" height="18" viewBox="0 0 15 18"><polygon points="0.5,0.5 14,9 0.5,17.5" fill="#a9d68b"/></svg>
<svg style="left:455px;top:334.54px;" width="13" height="15" viewBox="0 0 13 15"><path d="M0.7 0.7 H12.3 V9 L6.5 14 L0.7 9 Z" fill="#2b2b2b" stroke="#6e6e6e" stroke-width="1"/><path d="M3.5 5 H9.5" stroke="#8a8a8a" stroke-width="1"/></svg>
<svg style="left:455px;top:472.19px;" width="13" height="15" viewBox="0 0 13 15"><path d="M0.7 0.7 H12.3 V9 L6.5 14 L0.7 9 Z" fill="#2b2b2b" stroke="#6e6e6e" stroke-width="1"/><path d="M3.5 5 H9.5" stroke="#8a8a8a" stroke-width="1"/></svg>
<svg style="left:455px;top:554.78px;" width="13" height="15" viewBox="0 0 13 15"><path d="M0.7 0.7 H12.3 V9 L6.5 14 L0.7 9 Z" fill="#2b2b2b" stroke="#6e6e6e" stroke-width="1"/><path d="M3.5 5 H9.5" stroke="#8a8a8a" stroke-width="1"/></svg>
<svg style="left:1279px;top:115px;" width="18" height="16" viewBox="0 0 18 16"><polygon points="9,0.5 17.5,15.5 0.5,15.5" fill="#d9a31a"/><rect x="8.2" y="6" width="1.8" height="4.5" fill="#2b2b2b"/><rect x="8.2" y="11.6" width="1.8" height="1.8" fill="#2b2b2b"/></svg>
<div style="left:1300.50px;top:114.94px;font-size:14.6px;line-height:20px;color:#bbbbbb;font-family:'Liberation Sans', sans-serif;white-space:pre;">1</div>
<svg style="left:1316px;top:115px;" width="18" height="18" viewBox="0 0 18 18"><path d="M1 11 L4.5 1.5 L8 11 M2.3 7.5 H6.7" fill="none" stroke="#3fc4e8" stroke-width="1.5"/><path d="M5 12 L8.5 16 L14.5 9" fill="none" stroke="#3fc4e8" stroke-width="1.6"/></svg>
<div style="left:1336.00px;top:114.94px;font-size:14.6px;line-height:20px;color:#bbbbbb;font-family:'Liberation Sans', sans-serif;white-space:pre;">1</div>
<svg style="left:1354px;top:116px;" width="14" height="15" viewBox="0 0 14 15"><path d="M7 15 V1.5 M1 7.5 L7 1.5 L13 7.5" fill="none" stroke="#7ecdc9" stroke-width="1.6"/></svg>
<svg style="left:1381px;top:116px;" width="14" height="15" viewBox="0 0 14 15"><path d="M7 0 V13.5 M1 7.5 L7 13.5 L13 7.5" fill="none" stroke="#7ecdc9" stroke-width="1.6"/></svg>
<div style="left:1391px;top:139px;width:10px;height:207px;background:#4d4d4d;"></div>
<div style="left:1385px;top:347px;width:17px;height:3px;background:#d7a11a;"></div>
<div style="left:388px;top:604px;width:1014px;height:28px;background:#313335;"></div>
<div style="left:388px;top:604px;width:1014px;height:1px;background:#3a3c3e;"></div>
<svg style="left:477px;top:610px;" width="15" height="18" viewBox="0 0 15 18"><path d="M13.6 2.4 C12.6 1.1 10.4 1.2 9.6 3.2 L6.3 14 C5.6 16.2 3.4 16.9 1.3 15.6" fill="none" stroke="#c68ee0" stroke-width="1.7"/><path d="M5.2 7.3 H11.8" stroke="#c68ee0" stroke-width="1.5"/></svg>
<div style="left:499.70px;top:609.64px;font-size:14.6px;line-height:20px;color:#bbbbbb;font-family:'Liberation Sans', sans-serif;white-space:pre;letter-spacing:0.106px;">main</div>
<div style="left:1402px;top:72px;width:2px;height:561px;background:#2b2b2b;"></div>
<div style="left:1404px;top:72px;width:490px;height:561px;background:#3c3f41;"></div>
<div style="left:1404px;top:105px;width:490px;height:1px;background:#323232;"></div>
<div style="left:1411.00px;top:80.37px;font-size:14.8px;line-height:21px;color:#bbbbbb;font-family:'Liberation Sans', sans-serif;white-space:pre;letter-spacing:-0.084px;">AutoCp:</div>
<div style="left:1488.00px;top:80.37px;font-size:14.8px;line-height:21px;color:#bbbbbb;font-family:'Liberation Sans', sans-serif;white-space:pre;letter-spacing:-0.510px;">Nice_Pairs_.cpp</div>
<div style="left:1473px;top:102px;width:131px;height:4px;background:#74777a;"></div>
<div style="left:1619.50px;top:80.37px;font-size:14.8px;line-height:21px;color:#bbbbbb;font-family:'Liberation Sans', sans-serif;white-space:pre;letter-spacing:-0.143px;">Settings</div>
<div style="left:1843.2px;top:82.5px;width:3.2px;height:3.2px;border-radius:50%;background:#d7d7d7"></div>
<div style="left:1843.2px;top:87.5px;width:3.2px;height:3.2px;border-radius:50%;background:#d7d7d7"></div>
<div style="left:1843.2px;top:92.5px;width:3.2px;height:3.2px;border-radius:50%;background:#d7d7d7"></div>
<div style="left:1871px;top:87px;width:14px;height:3px;background:#dedede;"></div>
<div style="left:1414.60px;top:121.77px;font-size:14.8px;line-height:21px;color:#bbbbbb;font-family:'Liberation Sans', sans-serif;white-space:pre;letter-spacing:-0.369px;">Constraints:</div>
<svg style="left:1499px;top:122px;" width="18" height="18" viewBox="0 0 18 18">
<circle cx="9" cy="10" r="6.5" fill="none" stroke="#f1cf2e" stroke-width="1.8"/>
<path d="M9 6.5 V10 L11.5 12" fill="none" stroke="#f1cf2e" stroke-width="1.6"/>
<path d="M1 4 L4 1 M17 4 L14 1" stroke="#f1cf2e" stroke-width="1.8"/>
</svg>
<div style="left:1523.60px;top:121.77px;font-size:14.8px;line-height:21px;color:#bbbbbb;font-family:'Liberation Sans', sans-serif;white-space:pre;letter-spacing:-0.700px;">500ms</div>
<div style="left:1692px;top:116px;width:192px;height:30px;background:#4c5052;border:1px solid #5e6163;border-radius:4px;box-sizing:border-box;"></div>
<div style="left:1710.40px;top:122.07px;font-size:14.8px;line-height:21px;color:#bbbbbb;font-family:'Liberation Sans', sans-serif;white-space:pre;letter-spacing:-0.342px;">Reset Sample Testcases</div>
<div style="left:1404px;top:146px;width:490px;height:1px;background:#323232;"></div>
<div style="left:1405px;top:147px;width:487px;height:485px;background:#3c3f41;"></div>
<div style="left:1410.40px;top:155.37px;font-size:14.8px;line-height:21px;color:#bbbbbb;font-family:'Liberation Sans', sans-serif;white-space:pre;letter-spacing:-0.216px;">Sample Testcase #1</div>
<div style="left:1863px;top:164px;width:12px;height:2.5px;background:#c75450;"></div>
<div style="left:1410px;top:182px;width:477px;height:249px;background:#2b2b2b;"></div>
<div style="left:1410px;top:182px;width:29px;height:249px;background:#313335;"></div>
<div style="left:1439px;top:184px;width:1px;height:247px;background:#5a5a5a;"></div>
<div style="left:1440px;top:182px;width:447px;height:29px;background:#323232;"></div>
<div style="left:1418.40px;top:187.86px;font-size:16.67px;line-height:23px;color:#a4a3a3;font-family:'Liberation Mono', monospace;white-space:pre;">1</div>
<div style="left:1446.60px;top:187.86px;font-size:16.67px;line-height:23px;color:#a9b7c6;font-family:'Liberation Mono', monospace;white-space:pre;">3</div>
<div style="left:1418.40px;top:215.26px;font-size:16.67px;line-height:23px;color:#606366;font-family:'Liberation Mono', monospace;white-space:pre;">2</div>
<div style="left:1446.60px;top:215.26px;font-size:16.67px;line-height:23px;color:#a9b7c6;font-family:'Liberation Mono', monospace;white-space:pre;">3</div>
<div style="left:1418.40px;top:242.66px;font-size:16.67px;line-height:23px;color:#606366;font-family:'Liberation Mono', monospace;white-space:pre;">3</div>
<div style="left:1446.60px;top:242.66px;font-size:16.67px;line-height:23px;color:#a9b7c6;font-family:'Liberation Mono', monospace;white-space:pre;">123</div>
<div style="left:1418.40px;top:270.06px;font-size:16.67px;line-height:23px;color:#606366;font-family:'Liberation Mono', monospace;white-space:pre;">4</div>
<div style="left:1446.60px;top:270.06px;font-size:16.67px;line-height:23px;color:#a9b7c6;font-family:'Liberation Mono', monospace;white-space:pre;">5</div>
<div style="left:1418.40px;top:297.46px;font-size:16.67px;line-height:23px;color:#606366;font-family:'Liberation Mono', monospace;white-space:pre;">5</div>
<div style="left:1446.60px;top:297.46px;font-size:16.67px;line-height:23px;color:#a9b7c6;font-family:'Liberation Mono', monospace;white-space:pre;">13492</div>
<div style="left:1418.40px;top:324.86px;font-size:16.67px;line-height:23px;color:#606366;font-family:'Liberation Mono', monospace;white-space:pre;">6</div>
<div style="left:1446.60px;top:324.86px;font-size:16.67px;line-height:23px;color:#a9b7c6;font-family:'Liberation Mono', monospace;white-space:pre;">8</div>
<div style="left:1418.40px;top:352.26px;font-size:16.67px;line-height:23px;color:#606366;font-family:'Liberation Mono', monospace;white-space:pre;">7</div>
<div style="left:1446.60px;top:352.26px;font-size:16.67px;line-height:23px;color:#a9b7c6;font-family:'Liberation Mono', monospace;white-space:pre;">94241234</div>
<div style="left:1418.40px;top:379.66px;font-size:16.67px;line-height:23px;color:#606366;font-family:'Liberation Mono', monospace;white-space:pre;">8</div>
<div style="left:1410px;top:433px;width:477px;height:138px;background:#2b2b2b;"></div>
<div style="left:1410px;top:433px;width:29px;height:138px;background:#313335;"></div>
<div style="left:1439px;top:435px;width:1px;height:136px;background:#5a5a5a;"></div>
<div style="left:1440px;top:433px;width:447px;height:29px;background:#323232;"></div>
<div style="left:1418.40px;top:438.86px;font-size:16.67px;line-height:23px;color:#a4a3a3;font-family:'Liberation Mono', monospace;white-space:pre;">1</div>
<div style="left:1446.60px;top:438.86px;font-size:16.67px;line-height:23px;color:#a9b7c6;font-family:'Liberation Mono', monospace;white-space:pre;">3</div>
<div style="left:1418.40px;top:466.26px;font-size:16.67px;line-height:23px;color:#606366;font-family:'Liberation Mono', monospace;white-space:pre;">2</div>
<div style="left:1446.60px;top:466.26px;font-size:16.67px;line-height:23px;color:#a9b7c6;font-family:'Liberation Mono', monospace;white-space:pre;">2</div>
<div style="left:1418.40px;top:493.66px;font-size:16.67px;line-height:23px;color:#606366;font-family:'Liberation Mono', monospace;white-space:pre;">3</div>
<div style="left:1446.60px;top:493.66px;font-size:16.67px;line-height:23px;color:#a9b7c6;font-family:'Liberation Mono', monospace;white-space:pre;">9</div>
<div style="left:1418.40px;top:521.06px;font-size:16.67px;line-height:23px;color:#606366;font-family:'Liberation Mono', monospace;white-space:pre;">4</div>
<div style="left:1415px;top:597px;width:125px;height:30px;background:#3c3f41;border:1px solid #5e6163;border-radius:4px;box-sizing:border-box;background:#44484a;"></div>
<div style="left:1433.00px;top:603.37px;font-size:14.8px;line-height:21px;color:#bbbbbb;font-family:'Liberation Sans', sans-serif;white-space:pre;letter-spacing:-0.203px;">New Testcase</div>
<div style="left:1892px;top:72px;width:2px;height:561px;background:#2b2b2b;"></div>
<div style="left:1894px;top:72px;width:26px;height:894px;background:#3c3f41;"></div>
<div style="left:1892px;top:633px;width:2px;height:333px;background:#2f3133;"></div>
<svg style="left:1902px;top:86px;" width="14" height="14" viewBox="0 0 14 14">
<ellipse cx="7" cy="3" rx="6.5" ry="2.8" fill="#f0a732"/>
<path d="M0.5 5 Q7 9 13.5 5 V7.5 Q7 11.5 0.5 7.5 Z" fill="#f0a732"/>
<path d="M0.5 9.5 Q7 13.5 13.5 9.5 V11 Q7 15 0.5 11 Z" fill="#f0a732"/>
</svg>
<div style="left:1875px;top:124px;width:60px;height:18px;transform:rotate(90deg);font-family:'Liberation Sans';font-size:13px;line-height:18px;color:#bbbbbb;text-align:center;white-space:pre;letter-spacing:-0.1px">Database</div>
<div style="left:1894px;top:174px;width:26px;height:88px;background:#2d2f30;"></div>
<svg style="left:1900px;top:187px;" width="17" height="17" viewBox="0 0 17 17">
<defs><linearGradient id="fg3" x1="0" y1="1" x2="1" y2="0"><stop offset="0" stop-color="#6a00f4"/><stop offset="1" stop-color="#ff2d95"/></linearGradient>
<linearGradient id="cg3" x1="0" y1="0" x2="0" y2="1"><stop offset="0.55" stop-color="#ffffff"/><stop offset="1" stop-color="#9ff5f5"/></linearGradient></defs>
<g transform="scale(0.85)">
<circle cx="10" cy="10" r="9.3" fill="url(#cg3)" stroke="#e07ad8" stroke-width="0.8"/>
<path d="M10 17.2 C6.6 17.2 5.4 14.5 5.4 12.5 C5.4 10.5 6.1 9 7.2 7.4 C7.5 8.6 8 9.4 8.8 9.8 C10 9.1 11 7.6 11.4 4.6 C13.1 6.1 14.6 9.2 14.6 12.5 C14.6 15.2 12.7 17.2 10 17.2 Z" fill="url(#fg3)"/>
<path d="M10 15.3 C8.6 15.3 7.9 14.3 7.9 13.3 C7.9 12.3 8.7 11.4 10.3 11 C11.5 11.5 12.1 12.4 12.1 13.3 C12.1 14.4 11.3 15.3 10 15.3Z" fill="#ffffff"/>
</g>
</svg>
<div style="left:1875.5px;top:221px;width:60px;height:18px;transform:rotate(90deg);font-family:'Liberation Sans';font-size:13.5px;line-height:18px;color:#ffffff;text-align:center;white-space:pre;letter-spacing:-0.1px">AutoCp</div>
<div style="left:29px;top:632px;width:1863px;height:1px;background:#2b2b2b;"></div>
<div style="left:29px;top:633px;width:1863px;height:333px;background:#3c3f41;"></div>
<div style="left:36.50px;top:640.54px;font-size:14.6px;line-height:20px;color:#bbbbbb;font-family:'Liberation Sans', sans-serif;white-space:pre;letter-spacing:-0.969px;">Run:</div>
<svg style="left:89px;top:640px;" width="19" height="19" viewBox="0 0 19 19">
<defs><linearGradient id="fg4" x1="0" y1="1" x2="1" y2="0"><stop offset="0" stop-color="#6b2fc0"/><stop offset="1" stop-color="#b23aa8"/></linearGradient>
<linearGradient id="cg4" x1="0" y1="0" x2="0" y2="1"><stop offset="0.55" stop-color="#8d8d8f"/><stop offset="1" stop-color="#8a9a9c"/></linearGradient></defs>
<g transform="scale(0.95)">
<circle cx="10" cy="10" r="9.3" fill="url(#cg4)" stroke="#7a5a88" stroke-width="0.8"/>
<path d="M10 17.2 C6.6 17.2 5.4 14.5 5.4 12.5 C5.4 10.5 6.1 9 7.2 7.4 C7.5 8.6 8 9.4 8.8 9.8 C10 9.1 11 7.6 11.4 4.6 C13.1 6.1 14.6 9.2 14.6 12.5 C14.6 15.2 12.7 17.2 10 17.2 Z" fill="url(#fg4)"/>
<path d="M10 15.3 C8.6 15.3 7.9 14.3 7.9 13.3 C7.9 12.3 8.7 11.4 10.3 11 C11.5 11.5 12.1 12.4 12.1 13.3 C12.1 14.4 11.3 15.3 10 15.3Z" fill="#8d8d8f"/>
</g>
</svg>
<div style="left:113.00px;top:640.54px;font-size:14.6px;line-height:20px;color:#bbbbbb;font-family:'Liberation Sans', sans-serif;white-space:pre;letter-spacing:-0.491px;">Nice_Pairs_</div>
<svg style="left:195px;top:646px;" width="9" height="9" viewBox="0 0 9 9"><path d="M0.8 0.8 L8.2 8.2 M8.2 0.8 L0.8 8.2" stroke="#aeb0b2" stroke-width="1.2"/></svg>
<div style="left:73px;top:663px;width:145px;height:4px;background:#747a80;"></div>
<div style="left:1843.3000000000002px;top:643.5px;width:3.2px;height:3.2px;border-radius:50%;background:#d7d7d7"></div>
<div style="left:1843.3000000000002px;top:648.5px;width:3.2px;height:3.2px;border-radius:50%;background:#d7d7d7"></div>
<div style="left:1843.3000000000002px;top:653.5px;width:3.2px;height:3.2px;border-radius:50%;background:#d7d7d7"></div>
<div style="left:1871px;top:649px;width:14px;height:3px;background:#dedede;"></div>
<div style="left:65px;top:667px;width:1px;height:299px;background:#323232;"></div>
<svg style="left:40px;top:677px;" width="13" height="16" viewBox="0 0 13 16"><polygon points="0.5,0.5 12.5,8 0.5,15.5" fill="#a9d68b"/></svg>
<svg style="left:37px;top:709px;" width="18" height="18" viewBox="0 0 18 18">
<rect x="7" y="0.5" width="4" height="4" rx="0.8" fill="#c28ee3" transform="rotate(0 9 9)"/><rect x="7" y="0.5" width="4" height="4" rx="0.8" fill="#c28ee3" transform="rotate(60 9 9)"/><rect x="7" y="0.5" width="4" height="4" rx="0.8" fill="#c28ee3" transform="rotate(120 9 9)"/><rect x="7" y="0.5" width="4" height="4" rx="0.8" fill="#c28ee3" transform="rotate(180 9 9)"/><rect x="7" y="0.5" width="4" height="4" rx="0.8" fill="#c28ee3" transform="rotate(240 9 9)"/><rect x="7" y="0.5" width="4" height="4" rx="0.8" fill="#c28ee3" transform="rotate(300 9 9)"/>
<circle cx="9" cy="9" r="6.3" fill="#c28ee3"/><circle cx="9" cy="9" r="2.6" fill="#3c3f41"/>
</svg>
<div style="left:34px;top:739px;width:26px;height:1px;background:#4b4e50;"></div>
<div style="left:39px;top:752px;width:14px;height:13px;background:#5a5d5f;"></div>
<div style="left:34px;top:780px;width:26px;height:1px;background:#4b4e50;"></div>
<svg style="left:39px;top:794px;" width="15" height="11" viewBox="0 0 15 11">
<rect x="0" y="0" width="4" height="11" fill="#7a86d1"/><rect x="5" y="0" width="10" height="4" fill="#7a86d1"/>
<rect x="5" y="5" width="4.5" height="6" fill="#7a86d1"/><rect x="10.5" y="5" width="4.5" height="6" fill="#7a86d1"/>
</svg>
<div style="left:34px;top:821px;width:26px;height:1px;background:#4b4e50;"></div>
<svg style="left:40px;top:832px;" width="12" height="18" viewBox="0 0 12 18"><path d="M2 0 H10 V2 H9 V8 L11.5 10.5 V12 H0.5 V10.5 L3 8 V2 H2 Z" fill="#d48ef0"/><rect x="5.2" y="12" width="1.6" height="6" fill="#d48ef0"/></svg>
<div style="left:70px;top:671px;width:28px;height:28px;background:#5c6164;border-radius:4px;"></div>
<svg style="left:75px;top:678px;" width="18" height="14" viewBox="0 0 18 14"><path d="M0 1 H10 M0 4.5 H10 M0 8 H6" stroke="#62b543" stroke-width="1.6"/><path d="M7.5 9 L10.5 12 L16.5 5.5" fill="none" stroke="#62b543" stroke-width="1.8"/></svg>
<div style="left:102px;top:671px;width:28px;height:28px;background:#5c6164;border-radius:4px;"></div>
<svg style="left:107px;top:678px;" width="18" height="14" viewBox="0 0 18 14"><path d="M0 1 H10 M0 4.5 H10 M0 8 H6" stroke="#f4c82d" stroke-width="1.6"/><path d="M9 7 L15 13 M15 7 L9 13" stroke="#f4c82d" stroke-width="1.8"/></svg>
<div style="left:136px;top:673px;width:1px;height:24px;background:#4b4e50;"></div>
<svg style="left:150px;top:676px;" width="16" height="18" viewBox="0 0 16 18">
<polygon points="8,0 10.5,2.5 5.5,2.5" fill="#42b3aa"/><polygon points="8,18 10.5,15.5 5.5,15.5" fill="#42b3aa"/>
<path d="M0.5 13 L3.8 4 L7 13 M1.7 10 H5.8" fill="none" stroke="#42b3aa" stroke-width="1.7"/>
<path d="M8.5 4.5 H15 L8.5 12.8 H15.5" fill="none" stroke="#42b3aa" stroke-width="1.7"/>
</svg>
<svg style="left:181px;top:677px;" width="18" height="16" viewBox="0 0 18 16">
<path d="M4 0 V14 M0 10 L4 15 L8 10" fill="none" stroke="#aeb0b2" stroke-width="1.8"/>
<rect x="9" y="1" width="9" height="2" fill="#aeb0b2"/><rect x="10.5" y="6" width="7.5" height="2" fill="#aeb0b2"/><rect x="12" y="11" width="6" height="2" fill="#aeb0b2"/>
</svg>
<div style="left:210px;top:673px;width:1px;height:24px;background:#4b4e50;"></div>
<svg style="left:223px;top:677px;" width="16" height="16" viewBox="0 0 16 16"><path d="M10 6 L15 1 M10.5 1 H15 V5.5 M6 10 L1 15 M1 10.5 V15 H5.5" fill="none" stroke="#f4a9c8" stroke-width="1.7"/></svg>
<svg style="left:256px;top:677px;" width="16" height="16" viewBox="0 0 16 16"><path d="M9.5 6.5 L15 1 M9.5 2 V6.5 H14 M6.5 9.5 L1 15 M2 9.5 H6.5 V14" fill="none" stroke="#f4a9c8" stroke-width="1.7"/></svg>
<div style="left:284px;top:673px;width:1px;height:24px;background:#4b4e50;"></div>
<svg style="left:298px;top:678px;" width="14" height="15" viewBox="0 0 14 15"><path d="M7 15 V1.5 M1 7.5 L7 1.5 L13 7.5" fill="none" stroke="#5a5d5f" stroke-width="1.6"/></svg>
<svg style="left:331px;top:678px;" width="14" height="15" viewBox="0 0 14 15"><path d="M7 0 V13.5 M1 7.5 L7 13.5 L13 7.5" fill="none" stroke="#5a5d5f" stroke-width="1.6"/></svg>
<svg style="left:361px;top:676px;" width="21" height="20" viewBox="0 0 21 20">
<path d="M3.5 9 A6.5 6.5 0 1 1 5.5 13.6" fill="none" stroke="#e7e2c4" stroke-width="1.8"/>
<polygon points="0,8 7,8 3.5,12" fill="#e7e2c4"/>
<path d="M10 5 V9.5 L13 11.5" fill="none" stroke="#e7e2c4" stroke-width="1.6"/>
<polygon points="15,17 20,17 17.5,19.5" fill="#aeb0b2"/>
</svg>
<div style="left:410px;top:683px;width:3.4px;height:3.4px;border-radius:50%;background:#3fb4e3"></div>
<div style="left:415px;top:683px;width:3.4px;height:3.4px;border-radius:50%;background:#3fb4e3"></div>
<div style="left:420px;top:683px;width:3.4px;height:3.4px;border-radius:50%;background:#3fb4e3"></div>
<svg style="left:436px;top:676px;" width="18" height="18" viewBox="0 0 18 18">
<path d="M15.64 7.14 A7.48 7.48 0 1 1 13.600000000000001 3.4000000000000004" fill="none" stroke="#5fb860" stroke-width="1.7"/>
<path d="M5.1 7.65 L8.5 11.22 L16.15 2.04" fill="none" stroke="#5fb860" stroke-width="1.8"/>
</svg>
<div style="left:457.80px;top:674.94px;font-size:14.6px;line-height:20px;color:#bbbbbb;font-family:'Liberation Sans', sans-serif;white-space:pre;letter-spacing:-0.448px;">Tests passed: 1</div>
<div style="left:560.50px;top:674.94px;font-size:14.6px;line-height:20px;color:#8c8c8c;font-family:'Liberation Sans', sans-serif;white-space:pre;letter-spacing:-0.075px;">of 1 test – 155 ms</div>
<div style="left:66px;top:702px;width:1793px;height:1px;background:#323232;"></div>
<div style="left:66px;top:703px;width:364px;height:263px;background:#3c3f41;"></div>
<div style="left:65px;top:704px;width:365px;height:25px;background:#0d293e;"></div>
<svg style="left:72.5px;top:713px;" width="11" height="7" viewBox="0 0 11 7"><path d="M1 1 L5.5 5.5 L10 1" fill="none" stroke="#aeb0b2" stroke-width="1.5"/></svg>
<svg style="left:95.5px;top:707px;" width="18" height="18" viewBox="0 0 18 18">
<path d="M15.64 7.14 A7.48 7.48 0 1 1 13.600000000000001 3.4000000000000004" fill="none" stroke="#5fb860" stroke-width="1.7"/>
<path d="M5.1 7.65 L8.5 11.22 L16.15 2.04" fill="none" stroke="#5fb860" stroke-width="1.8"/>
</svg>
<div style="left:118.40px;top:707.74px;font-size:14.6px;line-height:20px;color:#bbbbbb;font-family:'Liberation Sans', sans-serif;white-space:pre;letter-spacing:-0.245px;">Test Results</div>
<div style="left:385.10px;top:709.22px;font-size:13.2px;line-height:18px;color:#dddddd;font-family:'Liberation Sans', sans-serif;white-space:pre;letter-spacing:-0.799px;">155 ms</div>
<svg style="left:95.5px;top:738px;" width="11" height="7" viewBox="0 0 11 7"><path d="M1 1 L5.5 5.5 L10 1" fill="none" stroke="#aeb0b2" stroke-width="1.5"/></svg>
<svg style="left:117.5px;top:732px;" width="18" height="18" viewBox="0 0 18 18">
<path d="M15.64 7.14 A7.48 7.48 0 1 1 13.600000000000001 3.4000000000000004" fill="none" stroke="#5fb860" stroke-width="1.7"/>
<path d="M5.1 7.65 L8.5 11.22 L16.15 2.04" fill="none" stroke="#5fb860" stroke-width="1.8"/>
</svg>
<div style="left:140.20px;top:732.44px;font-size:14.6px;line-height:20px;color:#bbbbbb;font-family:'Liberation Sans', sans-serif;white-space:pre;letter-spacing:-0.561px;">Nice_Pairs_</div>
<div style="left:385.10px;top:733.92px;font-size:13.2px;line-height:18px;color:#7a7a7a;font-family:'Liberation Sans', sans-serif;white-space:pre;letter-spacing:-0.799px;">155 ms</div>
<svg style="left:141px;top:757px;" width="18" height="18" viewBox="0 0 18 18">
<path d="M15.64 7.14 A7.48 7.48 0 1 1 13.600000000000001 3.4000000000000004" fill="none" stroke="#5fb860" stroke-width="1.7"/>
<path d="M5.1 7.65 L8.5 11.22 L16.15 2.04" fill="none" stroke="#5fb860" stroke-width="1.8"/>
</svg>
<div style="left:163.40px;top:757.24px;font-size:14.6px;line-height:20px;color:#bbbbbb;font-family:'Liberation Sans', sans-serif;white-space:pre;letter-spacing:-0.075px;">Sample Testcase #1</div>
<div style="left:385.10px;top:758.72px;font-size:13.2px;line-height:18px;color:#7a7a7a;font-family:'Liberation Sans', sans-serif;white-space:pre;letter-spacing:-0.799px;">155 ms</div>
<div style="left:430px;top:703px;width:1429px;height:263px;background:#2b2b2b;"></div>
<div style="left:1846px;top:739px;width:10px;height:227px;background:#4d4d4d;"></div>
<div style="left:430px;top:704px;width:1414px;height:262px;overflow:hidden">
<div style="left:17px;top:-10.74px;font-family:'Liberation Mono',monospace;font-size:16.67px;line-height:27px;white-space:pre;color:#bbbbbb">Building  Nice_Pairs_  ...</div>
<div style="left:17px;top:16.76px;font-family:'Liberation Mono',monospace;font-size:16.67px;line-height:27px;white-space:pre;color:#bbbbbb">Build completed in 7876ms</div>
<div style="left:17px;top:71.76px;font-family:'Liberation Mono',monospace;font-size:16.67px;line-height:27px;white-space:pre;color:#bbbbbb">               [ Sample Testcase #1 ]</div>
<div style="left:17px;top:99.26px;font-family:'Liberation Mono',monospace;font-size:16.67px;line-height:27px;white-space:pre;color:#bbbbbb">3</div>
<div style="left:17px;top:126.76px;font-family:'Liberation Mono',monospace;font-size:16.67px;line-height:27px;white-space:pre;color:#bbbbbb">2</div>
<div style="left:17px;top:154.26px;font-family:'Liberation Mono',monospace;font-size:16.67px;line-height:27px;white-space:pre;color:#bbbbbb">9</div>
<div style="left:17px;top:209.26px;font-family:'Liberation Mono',monospace;font-size:16.67px;line-height:27px;white-space:pre;color:#bbbbbb">[+] SUCCESS: CORRECT ANSWER</div>
<div style="left:18px;top:91.70000000000005px;width:8px;height:1.6px;background:#bbbbbb"></div>
<div style="left:28px;top:91.70000000000005px;width:8px;height:1.6px;background:#bbbbbb"></div>
<div style="left:38px;top:91.70000000000005px;width:8px;height:1.6px;background:#bbbbbb"></div>
<div style="left:48px;top:91.70000000000005px;width:8px;height:1.6px;background:#bbbbbb"></div>
<div style="left:58px;top:91.70000000000005px;width:8px;height:1.6px;background:#bbbbbb"></div>
<div style="left:68px;top:91.70000000000005px;width:8px;height:1.6px;background:#bbbbbb"></div>
<div style="left:78px;top:91.70000000000005px;width:8px;height:1.6px;background:#bbbbbb"></div>
<div style="left:88px;top:91.70000000000005px;width:8px;height:1.6px;background:#bbbbbb"></div>
<div style="left:98px;top:91.70000000000005px;width:8px;height:1.6px;background:#bbbbbb"></div>
<div style="left:108px;top:91.70000000000005px;width:8px;height:1.6px;background:#bbbbbb"></div>
<div style="left:118px;top:91.70000000000005px;width:8px;height:1.6px;background:#bbbbbb"></div>
<div style="left:128px;top:91.70000000000005px;width:8px;height:1.6px;background:#bbbbbb"></div>
<div style="left:138px;top:91.70000000000005px;width:8px;height:1.6px;background:#bbbbbb"></div>
<div style="left:148px;top:91.70000000000005px;width:8px;height:1.6px;background:#bbbbbb"></div>
<div style="left:158px;top:91.70000000000005px;width:8px;height:1.6px;background:#bbbbbb"></div>
<div style="left:388px;top:91.70000000000005px;width:8px;height:1.6px;background:#bbbbbb"></div>
<div style="left:398px;top:91.70000000000005px;width:8px;height:1.6px;background:#bbbbbb"></div>
<div style="left:408px;top:91.70000000000005px;width:8px;height:1.6px;background:#bbbbbb"></div>
<div style="left:418px;top:91.70000000000005px;width:8px;height:1.6px;background:#bbbbbb"></div>
<div style="left:428px;top:91.70000000000005px;width:8px;height:1.6px;background:#bbbbbb"></div>
<div style="left:438px;top:91.70000000000005px;width:8px;height:1.6px;background:#bbbbbb"></div>
<div style="left:448px;top:91.70000000000005px;width:8px;height:1.6px;background:#bbbbbb"></div>
<div style="left:458px;top:91.70000000000005px;width:8px;height:1.6px;background:#bbbbbb"></div>
<div style="left:468px;top:91.70000000000005px;width:8px;height:1.6px;background:#bbbbbb"></div>
<div style="left:478px;top:91.70000000000005px;width:8px;height:1.6px;background:#bbbbbb"></div>
<div style="left:488px;top:91.70000000000005px;width:8px;height:1.6px;background:#bbbbbb"></div>
<div style="left:498px;top:91.70000000000005px;width:8px;height:1.6px;background:#bbbbbb"></div>
<div style="left:508px;top:91.70000000000005px;width:8px;height:1.6px;background:#bbbbbb"></div>
<div style="left:518px;top:91.70000000000005px;width:8px;height:1.6px;background:#bbbbbb"></div>
<div style="left:528px;top:91.70000000000005px;width:8px;height:1.6px;background:#bbbbbb"></div>
</div>
<svg style="left:1870px;top:715px;" width="13" height="13" viewBox="0 0 13 13"><path d="M6.5 13 V1.5 M1 7 L6.5 1.5 L12 7" fill="none" stroke="#5a5d5f" stroke-width="1.5"/></svg>
<svg style="left:1870px;top:748px;" width="13" height="13" viewBox="0 0 13 13"><path d="M6.5 0 V11.5 M1 6 L6.5 11.5 L12 6" fill="none" stroke="#5a5d5f" stroke-width="1.5"/></svg>
<svg style="left:1868px;top:779px;" width="17" height="14" viewBox="0 0 17 14"><path d="M0.5 1.5 H15 M0.5 6 H12 Q15.5 6 15.5 9 Q15.5 12 12 12 H8 M0.5 11 H4" fill="none" stroke="#878ef5" stroke-width="1.6"/><polygon points="7,12 10,9.5 10,14.5" fill="#878ef5"/></svg>
<div style="left:1862px;top:805px;width:28px;height:28px;background:#5c6164;border-radius:4px;"></div>
<svg style="left:1868px;top:811px;" width="16" height="17" viewBox="0 0 16 17"><path d="M4 1 H12 M4 4 H12 M4 7 H12" stroke="#f0598a" stroke-width="1.5"/><polygon points="1,9.5 15,9.5 8,16" fill="#f0598a"/></svg>
<svg style="left:1867px;top:843px;" width="18" height="16" viewBox="0 0 18 16">
<rect x="4" y="0" width="10" height="4" fill="#4fc6df"/><rect x="0" y="4" width="18" height="8" rx="1.5" fill="#4fc6df"/>
<rect x="4" y="9" width="10" height="7" fill="#4fc6df"/><rect x="5.8" y="10.5" width="6.4" height="4" fill="#3c3f41"/>
</svg>
<svg style="left:1869px;top:876px;" width="14" height="16" viewBox="0 0 14 16"><rect x="0" y="1.5" width="14" height="2.2" fill="#f2526d"/><rect x="4.5" y="0" width="5" height="2" fill="#f2526d"/><path d="M1.3 4.5 H12.7 L11.7 16 H2.3 Z" fill="#f2526d"/></svg>
<div style="left:0px;top:966px;width:1920px;height:1px;background:#2f3133;"></div>
<div style="left:0px;top:967px;width:1920px;height:27px;background:#3c3f41;"></div>
<div style="left:0px;top:994px;width:1920px;height:1px;background:#323232;"></div>
<div style="left:26px;top:967px;width:66px;height:27px;background:#2d2f30;"></div>
<svg style="left:43px;top:977px;" width="10" height="11" viewBox="0 0 10 11"><polygon points="0.5,0.5 9.5,5.5 0.5,10.5" fill="#a9d68b"/></svg>
<div style="left:60.30px;top:973.85px;font-size:13.4px;line-height:19px;color:#ffffff;font-family:'Liberation Sans', sans-serif;white-space:pre;letter-spacing:-1.594px;">Run</div>
<svg style="left:107px;top:975px;" width="13" height="14" viewBox="0 0 13 14"><rect x="0.7" y="0.7" width="11.6" height="12.6" fill="none" stroke="#c27d63" stroke-width="1.4"/><rect x="3" y="2.5" width="7" height="9" fill="#c27d63" opacity="0.45"/><polygon points="6.5,4 7.3,6 9.3,6 7.7,7.2 8.3,9.2 6.5,8 4.7,9.2 5.3,7.2 3.7,6 5.7,6" fill="#c27d63"/></svg>
<div style="left:125.80px;top:973.85px;font-size:13.4px;line-height:19px;color:#bbbbbb;font-family:'Liberation Sans', sans-serif;white-space:pre;letter-spacing:-0.853px;">TODO</div>
<svg style="left:189px;top:975px;" width="14" height="14" viewBox="0 0 14 14"><circle cx="7" cy="7" r="6.8" fill="#aeb0b2"/><rect x="6" y="3" width="2" height="5.5" fill="#3c3f41"/><rect x="6" y="9.8" width="2" height="2" fill="#3c3f41"/></svg>
<div style="left:209.00px;top:973.85px;font-size:13.4px;line-height:19px;color:#bbbbbb;font-family:'Liberation Sans', sans-serif;white-space:pre;letter-spacing:-0.331px;">Problems</div>
<svg style="left:291px;top:976px;" width="15" height="11" viewBox="0 0 15 11"><rect x="0" y="0" width="15" height="11" fill="#b16bb1"/><path d="M2 2.5 L5 5 L2 7.5" fill="none" stroke="#3c3f41" stroke-width="1.2"/><rect x="6" y="7.5" width="4" height="1.2" fill="#3c3f41"/></svg>
<div style="left:311.50px;top:973.85px;font-size:13.4px;line-height:19px;color:#bbbbbb;font-family:'Liberation Sans', sans-serif;white-space:pre;letter-spacing:-0.222px;">Terminal</div>
<svg style="left:386px;top:975px;" width="15" height="14" viewBox="0 0 15 14"><polygon points="7.5,0 15,14 0,14" fill="#aeb0b2"/><polygon points="7.5,6 9,12 4.5,12" fill="#3c3f41"/></svg>
<div style="left:406.60px;top:973.85px;font-size:13.4px;line-height:19px;color:#bbbbbb;font-family:'Liberation Sans', sans-serif;white-space:pre;letter-spacing:-0.870px;">CMake</div>
<svg style="left:474px;top:974px;" width="16" height="16" viewBox="0 0 16 16">
<polygon points="8,0.5 15.5,4 8,7.5 0.5,4" fill="#aeb0b2"/>
<path d="M0.5 7.5 L8 11 L15.5 7.5 M0.5 11 L8 14.5 L15.5 11" fill="none" stroke="#aeb0b2" stroke-width="1.6"/>
</svg>
<div style="left:495.20px;top:973.85px;font-size:13.4px;line-height:19px;color:#bbbbbb;font-family:'Liberation Sans', sans-serif;white-space:pre;letter-spacing:-0.558px;">Python Packages</div>
<svg style="left:1802px;top:975px;" width="17" height="16" viewBox="0 0 17 16"><path d="M16 15 H8 A7 7 0 1 1 15 8 Z" fill="none" stroke="#aeb0b2" stroke-width="1.6"/></svg>
<div style="left:1824.00px;top:973.85px;font-size:13.4px;line-height:19px;color:#bbbbbb;font-family:'Liberation Sans', sans-serif;white-space:pre;letter-spacing:-0.483px;">Event Log</div>
<div style="left:0px;top:995px;width:1920px;height:25px;background:#3c3f41;"></div>
<svg style="left:7px;top:999px;" width="16" height="17" viewBox="0 0 16 17">
<polygon points="8,0.5 15.5,5 8,9.5 0.5,5" fill="#e8e8e8"/>
<path d="M0.5 8.5 L8 13 L15.5 8.5 M0.5 11.5 L8 16 L15.5 11.5" fill="none" stroke="#e8e8e8" stroke-width="1.6"/>
</svg>
<div style="left:34.20px;top:997.44px;font-size:14.6px;line-height:20px;color:#bbbbbb;font-family:'Liberation Sans', sans-serif;white-space:pre;letter-spacing:-0.013px;">Tests passed: 1 (moments ago)</div>
<div style="left:1476.80px;top:997.64px;font-size:14.6px;line-height:20px;color:#bbbbbb;font-family:'Liberation Sans', sans-serif;white-space:pre;letter-spacing:-0.643px;">13:14</div>
<div style="left:1525.50px;top:997.64px;font-size:14.6px;line-height:20px;color:#bbbbbb;font-family:'Liberation Sans', sans-serif;white-space:pre;">LF</div>
<div style="left:1555.40px;top:997.64px;font-size:14.6px;line-height:20px;color:#bbbbbb;font-family:'Liberation Sans', sans-serif;white-space:pre;letter-spacing:-0.773px;">UTF-8</div>
<div style="left:1609.00px;top:997.64px;font-size:14.6px;line-height:20px;color:#bbbbbb;font-family:'Liberation Sans', sans-serif;white-space:pre;letter-spacing:-0.382px;">4 spaces</div>
<div style="left:1680.00px;top:997.64px;font-size:14.6px;line-height:20px;color:#bbbbbb;font-family:'Liberation Sans', sans-serif;white-space:pre;letter-spacing:-0.181px;">C++: Nice_Pairs_ | Debug</div>
<svg style="left:1860px;top:1000px;" width="15" height="14" viewBox="0 0 15 14"><path d="M3.5 7 V4 A3 3 0 0 1 9.5 4" fill="none" stroke="#8fb0c4" stroke-width="1.5"/><rect x="5" y="7" width="9.5" height="7" fill="#8fb0c4"/></svg>
<svg style="left:1888px;top:999px;" width="21" height="18" viewBox="0 0 21 18">
<path d="M3 13 A3.5 3.5 0 0 1 4 6 A6 6 0 0 1 15 5 A4 4 0 0 1 17 12" fill="#aeb0b2"/>
<rect x="3" y="9" width="13" height="4" fill="#aeb0b2"/>
<text x="6.5" y="11" font-family="Liberation Sans" font-weight="700" font-size="9" fill="#3c3f41">?</text>
<circle cx="16" cy="14" r="3.5" fill="#aeb0b2" stroke="#3c3f41" stroke-width="1"/><circle cx="16" cy="14" r="1.3" fill="#3c3f41"/>
</svg>
</body></html>
